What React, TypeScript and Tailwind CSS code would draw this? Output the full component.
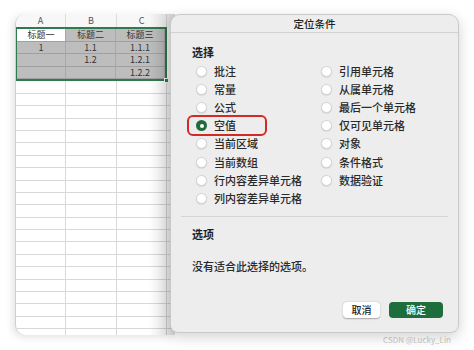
const font = { fontFamily: '"Noto Sans CJK SC", "Noto Sans", sans-serif' };

const LEFT = ['批注', '常量', '公式', '空值', '当前区域', '当前数组', '行内容差异单元格', '列内容差异单元格'];
const RIGHT = ['引用单元格', '从属单元格', '最后一个单元格', '仅可见单元格', '对象', '条件格式', '数据验证'];

const DATA = [
  ['标题一', '标题二', '标题三'],
  ['1', '1.1', '1.1.1'],
  ['', '1.2', '1.2.1'],
  ['', '', '1.2.2'],
];

function Radio({ checked }: { checked?: boolean }) {
  if (checked) {
    return (
      <span className="w-[11px] h-[11px] rounded-full bg-[#1d6e3c] flex items-center justify-center shrink-0">
        <span className="w-[4px] h-[4px] rounded-full bg-white" />
      </span>
    );
  }
  return <span className="w-[11px] h-[11px] rounded-full bg-white border border-[#d4d4d4] shadow-[0_0.5px_1px_rgba(0,0,0,0.15)] shrink-0" />;
}

function Option({ label, checked }: { label: string; checked?: boolean }) {
  return (
    <div className="relative h-[18.2px] flex items-center gap-[7px]">
      {checked && (
        <span className="absolute left-[-9px] top-[-1.5px] w-[80px] h-[21px] rounded-[6px] border-2 border-[#d42a25]" />
      )}
      <Radio checked={checked} />
      <span className="text-[11px] font-medium text-[#2a2a2a] leading-none">{label}</span>
    </div>
  );
}

function Sheet() {
  const empty = Array.from({ length: 21 });
  return (
    <div className="mt-[14px] ml-[15px] w-[160px] h-[321px] bg-white rounded-tl-[10px] rounded-bl-[10px] border-l border-[#cfcfcf] shadow-[-2px_2px_8px_rgba(0,0,0,0.12)] overflow-hidden relative">
      <div className="flex h-[13px] text-[9px] text-[#555] leading-[13px] bg-[#f7f7f7]">
        <div className="w-[50px] text-center border-r border-[#dcdcdc]">A</div>
        <div className="w-[51px] text-center border-r border-[#dcdcdc]">B</div>
        <div className="w-[50px] text-center border-r border-[#dcdcdc]">C</div>
      </div>
      <div className="relative border-2 border-[#2e7b4f] w-[152px] ml-[-1px]">
        {DATA.map((row, i) => (
          <div key={i} className="flex h-[12.6px] text-[9px] text-[#333] leading-[12px] border-b border-[#a0a0a0]">
            {row.map((c, j) => (
              <div
                key={j}
                className={`${j === 1 ? 'w-[51px]' : 'w-[50px]'} text-center border-r border-[#a8a8a8] ${i === 0 && j === 0 ? 'bg-white' : 'bg-[#bdbdbd]'}`}
              >
                {c}
              </div>
            ))}
          </div>
        ))}
        <span className="absolute right-[-4px] bottom-[-4px] w-[5px] h-[5px] bg-[#2e7b4f] border border-white" />
      </div>
      {empty.map((_, i) => (
        <div key={i} className="flex h-[12.4px] border-b border-[#d8d8d8]">
          <div className="w-[50px] border-r border-[#d8d8d8]" />
          <div className="w-[51px] border-r border-[#d8d8d8]" />
          <div className="w-[50px] border-r border-[#d8d8d8]" />
        </div>
      ))}
      <div className="absolute top-0 right-0 w-[26px] h-full bg-gradient-to-r from-transparent to-[rgba(0,0,0,0.16)]" />
    </div>
  );
}

export default function App() {
  return (
    <div className="w-[474px] h-[350px] bg-white flex relative overflow-hidden" style={font}>
      <Sheet />
      <div className="mt-[14px] ml-[-5px] w-[289px] h-[319px] bg-[#ededed] rounded-t-[10px] rounded-b-[8px] border border-[#c9c9c9] shadow-[0_4px_14px_rgba(0,0,0,0.18)] flex flex-col relative z-10">
        <div className="h-[18px] border-b border-[#d2d2d2] flex items-center justify-center text-[10.5px] font-medium text-[#222]">
          定位条件
        </div>
        <div className="pl-[21px] pt-[12px] text-[11px] font-bold text-[#1f1f1f] leading-[14px]">选择</div>
        <div className="pl-[25px] pt-[3px] flex">
          <div className="w-[125px] flex flex-col">
            {LEFT.map((l) => (
              <Option key={l} label={l} checked={l === '空值'} />
            ))}
          </div>
          <div className="flex flex-col">
            {RIGHT.map((l) => (
              <Option key={l} label={l} />
            ))}
          </div>
        </div>
        <div className="mx-[10px] mt-[8px] border-t border-[#d6d6d6]" />
        <div className="pl-[21px] pt-[10px] text-[11px] font-bold text-[#1f1f1f] leading-[14px]">选项</div>
        <div className="pl-[21px] pt-[18px] text-[11px] font-medium text-[#2a2a2a] leading-[14px]">没有适合此选择的选项。</div>
        <div className="mt-auto mb-[14px] pr-[15px] flex justify-end gap-[9px]">
          <button className="w-[37px] h-[16px] rounded-[4px] bg-white shadow-[0_0.5px_1.5px_rgba(0,0,0,0.3)] text-[10px] font-medium text-[#222] leading-none">
            取消
          </button>
          <button className="w-[54px] h-[16px] rounded-[4px] bg-[#1d6e3c] text-[10px] font-medium text-white leading-none">
            确定
          </button>
        </div>
      </div>
      <div className="absolute left-[383px] top-[336px] text-[8px] text-[#c8c8c8] leading-none">CSDN @Lucky_Lin</div>
    </div>
  );
}
